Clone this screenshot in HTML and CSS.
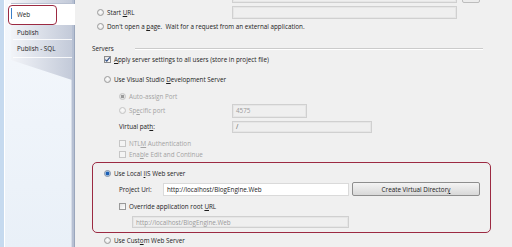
FILE: index.html
```html
<!DOCTYPE html>
<html lang="en">
<head>
    <meta charset="UTF-8">
    <title>Web - Project Properties</title>
    <link rel="stylesheet" href="styles.css">
</head>
<body>
    <div class="window">
        <aside class="nav">
            <ul class="tabs">
                <li class="tab tab-top"></li>
                <li class="tab tab-active"><span class="tab-mark">Web</span></li>
                <li class="tab tab-publish">Publish</li>
                <li class="tab tab-sql">Publish - SQL</li>
            </ul>
        </aside>

        <main class="page">
            <div class="row row-cut">
                <span class="label-cell"></span>
                <span class="input input-url"></span>
                <span class="btn-browse"></span>
            </div>
            <div class="row row-start">
                <label class="label-cell"><span class="radio"></span><span>Start <u>U</u>RL</span></label>
                <span class="input input-url"></span>
            </div>
            <div class="row row-none">
                <label><span class="radio"></span><span>Don't open a <u>p</u>age.&nbsp; Wait for a request from an external application.</span></label>
            </div>

            <div class="group-head">
                <span class="group-title">Servers</span>
                <span class="group-line"></span>
            </div>
            <div class="row row-apply opt">
                <label><span class="check checked"><svg viewBox="0 0 7 7" width="7" height="7"><path d="M1.3 3.6 L2.8 5.2 L5.8 1.4" fill="none" stroke="#2f4f86" stroke-width="1.2"/></svg></span><span><u>A</u>pply server settings to all users (store in project file)</span></label>
            </div>
            <div class="row row-vs opt">
                <label><span class="radio"></span><span>Use Visual Studio <u>D</u>evelopment Server</span></label>
            </div>
            <div class="row row-auto sub disabled">
                <label><span class="radio dot-gray"></span><span>Auto-assign Port</span></label>
            </div>
            <div class="row row-port sub disabled">
                <label class="label-cell-sub"><span class="radio"></span><span>Sp<u>e</u>cific port</span></label>
                <span class="input input-port">4575</span>
            </div>
            <div class="row row-path sub">
                <label class="label-cell-sub"><span>Virtual pat<u>h</u>:</span></label>
                <span class="input input-path">/</span>
            </div>
            <div class="row row-ntlm sub disabled">
                <label><span class="check"></span><span>NTL<u>M</u> Authentication</span></label>
            </div>
            <div class="row row-edit sub disabled">
                <label><span class="check"></span><span>Ena<u>b</u>le Edit and Continue</span></label>
            </div>

            <section class="iis-box">
                <div class="row row-iis">
                    <label><span class="radio dot-blue"></span><span>Use Local <u>I</u>IS Web server</span></label>
                </div>
                <div class="row row-project">
                    <label class="project-label">Project Url:</label>
                    <span class="input input-project">http://localhost/BlogEngine.Web</span>
                    <button class="btn"><span>Create Virtual Director<u>y</u></span></button>
                </div>
                <div class="row row-override">
                    <label><span class="check"></span><span>Override application root <u>U</u>RL</span></label>
                </div>
                <div class="row row-root">
                    <span class="input input-root">http://localhost/BlogEngine.Web</span>
                </div>
            </section>

            <div class="row row-custom opt">
                <label><span class="radio"></span><span>Use Cust<u>o</u>m Web Server</span></label>
            </div>
        </main>
    </div>
</body>
</html>
```

FILE: styles.css
```css
* {
    margin: 0;
    padding: 0;
    box-sizing: border-box;
}

body {
    background: #f0f0f0;
    font-family: "Open Sans", "Noto Sans", sans-serif;
    font-size: 6.3px;
    color: #1c1c1c;
    overflow: hidden;
}

.window {
    display: flex;
    height: 247px;
}

/* left navigation */

.nav {
    flex: 0 0 75px;
    height: 247px;
    background:
        linear-gradient(to right, #c6daef 0 4px, #ffffff 4px 5px, transparent 5px 71px, #d7dde8 71px 72px, #b6c0d3 72px 74px, #9aa6bc 74px 75px),
        linear-gradient(#f5f8fc, #e9f0f8);
}

.tabs {
    list-style: none;
    margin-left: 8px;
    height: 82px;
    background: linear-gradient(to right, transparent 0 3px, #f2f4f8 3px, #c3cad9 64px, transparent 64px);
    clip-path: polygon(0 0, 100% 0, 100% 82px, 64px 82px, 64px 80px, 3px 60px, 0 60px);
}

.tab {
    margin: 0 3px 0 5px;
    padding-left: 4px;
    display: flex;
    align-items: center;
    border-bottom: 1px solid rgba(255, 255, 255, 0.85);
}

.tab-top {
    height: 4px;
    border-bottom: 1px solid #b9c1d1;
    margin-left: 3px;
}

.tab-active {
    margin: 0;
    padding: 0;
    height: 21px;
    border-bottom: none;
    background:
        linear-gradient(#3b7fc9, #3b7fc9) no-repeat 3px 4px / 1px 11px,
        #ffffff;
}

.tab-mark {
    width: 49px;
    height: 20px;
    padding-left: 8px;
    display: flex;
    align-items: center;
    border: 1px solid #9c2a42;
    border-radius: 4px;
}

.tab-publish {
    height: 15px;
}

.tab-sql {
    height: 18px;
}

/* main page */

.page {
    flex: 1;
    padding-left: 17px;
    display: flex;
    flex-direction: column;
}

.row {
    display: flex;
    align-items: center;
    white-space: nowrap;
}

.row label {
    display: flex;
    align-items: center;
}

.disabled label {
    color: #a3a3a3;
}

.row-cut {
    height: 14px;
    margin-top: -11px;
    padding-left: 5px;
}

.row-start {
    height: 13px;
    margin-top: 3px;
    padding-left: 5px;
}

.label-cell {
    flex: 0 0 135px;
}

.label-cell-sub {
    flex: 0 0 113px;
}

.row-none {
    height: 14px;
    margin-top: 1px;
    padding-left: 5px;
}

.opt {
    padding-left: 12px;
}

.sub {
    padding-left: 27px;
}

.group-head {
    display: flex;
    align-items: center;
    width: 391px;
    height: 12px;
    margin-top: 9px;
}

.group-title {
    flex: 0 0 43px;
}

.group-line {
    flex: 1;
    height: 2px;
    border-top: 1px solid #cbcbcb;
    border-bottom: 1px solid #ffffff;
}

.row-apply { height: 10px; }
.row-vs { height: 14px; margin-top: 8px; }
.row-auto { height: 13px; margin-top: 3px; }
.row-port { height: 14px; margin-top: 1px; }
.row-path { height: 13px; margin-top: 3px; }
.row-ntlm { height: 12px; margin-top: 4px; }
.row-edit { height: 10px; }

/* radio and checkbox glyphs */

.radio {
    width: 7px;
    height: 7px;
    margin-right: 3px;
    border-radius: 50%;
    border: 1px solid #9b9b9b;
    background: radial-gradient(circle at 50% 40%, #ffffff, #dcdcdc);
    flex: 0 0 auto;
}

.disabled .radio {
    border-color: #c4c4c4;
    background: radial-gradient(circle at 50% 40%, #fbfbfb, #e8e8e8);
}

.radio.dot-gray {
    background: radial-gradient(circle, #9a9a9a 0 1.6px, #e4e4e4 2px);
}

.radio.dot-blue {
    border-color: #7f8ea3;
    background: radial-gradient(circle, #1c5fb5 0 1.5px, #8cb4e0 2px, #e6eef7 2.6px);
}

.check {
    width: 7px;
    height: 7px;
    margin-right: 3px;
    border: 1px solid #999999;
    background: linear-gradient(135deg, #e2e2e2, #ffffff);
    flex: 0 0 auto;
    display: flex;
}

.check svg {
    margin: -1px;
}

.disabled .check {
    border-color: #c6c6c6;
    background: #f4f4f4;
}

.row-apply .check {
    border-color: #8b8b8b;
}

/* inputs and buttons */

.input {
    display: flex;
    align-items: center;
    padding-left: 3px;
    border: 1px solid #d0d0d0;
    box-shadow: inset 0 0 0 1px #e6e6e6;
    background: #efefef;
    color: #9a9a9a;
    height: 100%;
}

.input-url {
    width: 225px;
}

.btn-browse {
    width: 18px;
    height: 100%;
    margin-left: 5px;
    border: 1px solid #bdbdbd;
    border-radius: 2px;
    background: #ececec;
}

.input-port {
    width: 75px;
}

.input-path {
    width: 140px;
    color: #555555;
}

.iis-box {
    width: 399px;
    height: 71px;
    margin-top: 3px;
    padding: 4px 0 0 11px;
    border: 1px solid #9c2a42;
    border-radius: 5px;
}

.row-iis { height: 13px; }

.row-project {
    height: 14px;
    margin-top: 2px;
    padding-left: 15px;
}

.project-label {
    flex: 0 0 44px;
}

.input-project {
    width: 186px;
    height: 13px;
    background: #ffffff;
    color: #1c1c1c;
    box-shadow: none;
    border-color: #dadada;
}

.btn {
    width: 128px;
    height: 14px;
    margin-left: 3px;
    font: inherit;
    color: #1c1c1c;
    border: 1px solid #8e8e8e;
    border-radius: 2px;
    background: linear-gradient(#f4f4f4, #e6e6e6 50%, #d8d8d8);
}

.row-override {
    height: 12px;
    margin-top: 4px;
    padding-left: 15px;
}

.row-root {
    height: 12px;
    margin-top: 4px;
    padding-left: 28px;
}

.input-root {
    width: 217px;
}

.row-custom {
    height: 13px;
    margin-top: 1px;
}
```
